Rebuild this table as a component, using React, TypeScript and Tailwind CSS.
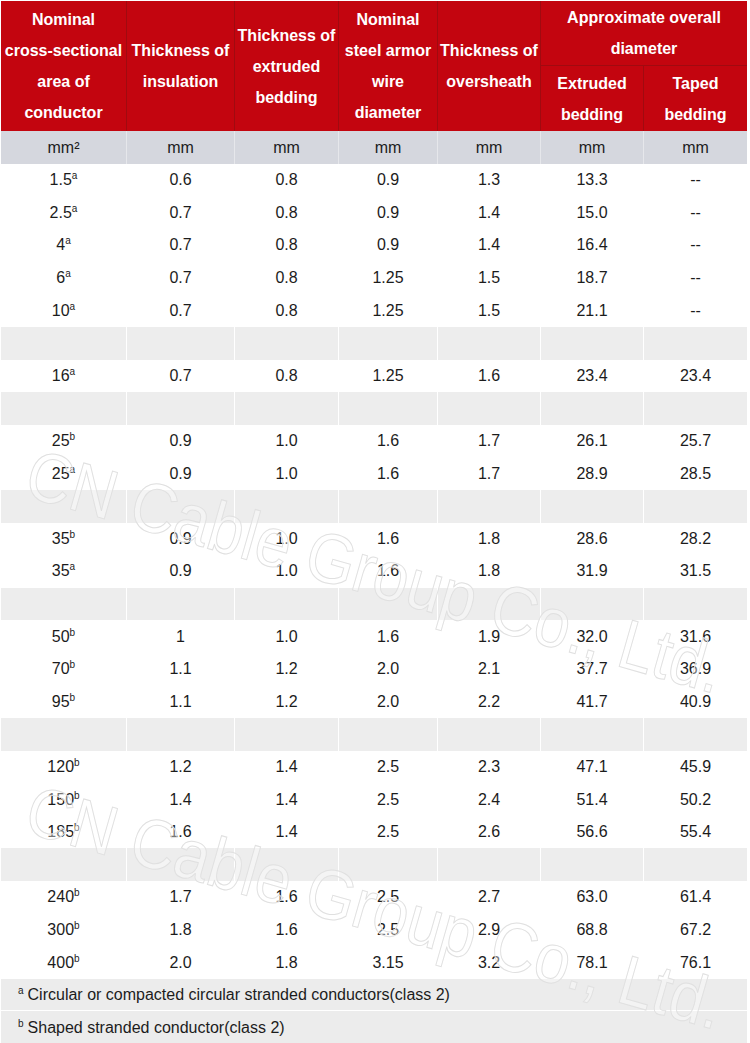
import React from 'react';

type Row = { size: string; note: 'a' | 'b'; vals: string[] } | null;

const rows: Row[] = [
  { size: '1.5', note: 'a', vals: ['0.6', '0.8', '0.9', '1.3', '13.3', '--'] },
  { size: '2.5', note: 'a', vals: ['0.7', '0.8', '0.9', '1.4', '15.0', '--'] },
  { size: '4', note: 'a', vals: ['0.7', '0.8', '0.9', '1.4', '16.4', '--'] },
  { size: '6', note: 'a', vals: ['0.7', '0.8', '1.25', '1.5', '18.7', '--'] },
  { size: '10', note: 'a', vals: ['0.7', '0.8', '1.25', '1.5', '21.1', '--'] },
  null,
  { size: '16', note: 'a', vals: ['0.7', '0.8', '1.25', '1.6', '23.4', '23.4'] },
  null,
  { size: '25', note: 'b', vals: ['0.9', '1.0', '1.6', '1.7', '26.1', '25.7'] },
  { size: '25', note: 'a', vals: ['0.9', '1.0', '1.6', '1.7', '28.9', '28.5'] },
  null,
  { size: '35', note: 'b', vals: ['0.9', '1.0', '1.6', '1.8', '28.6', '28.2'] },
  { size: '35', note: 'a', vals: ['0.9', '1.0', '1.6', '1.8', '31.9', '31.5'] },
  null,
  { size: '50', note: 'b', vals: ['1', '1.0', '1.6', '1.9', '32.0', '31.6'] },
  { size: '70', note: 'b', vals: ['1.1', '1.2', '2.0', '2.1', '37.7', '36.9'] },
  { size: '95', note: 'b', vals: ['1.1', '1.2', '2.0', '2.2', '41.7', '40.9'] },
  null,
  { size: '120', note: 'b', vals: ['1.2', '1.4', '2.5', '2.3', '47.1', '45.9'] },
  { size: '150', note: 'b', vals: ['1.4', '1.4', '2.5', '2.4', '51.4', '50.2'] },
  { size: '185', note: 'b', vals: ['1.6', '1.4', '2.5', '2.6', '56.6', '55.4'] },
  null,
  { size: '240', note: 'b', vals: ['1.7', '1.6', '2.5', '2.7', '63.0', '61.4'] },
  { size: '300', note: 'b', vals: ['1.8', '1.6', '2.5', '2.9', '68.8', '67.2'] },
  { size: '400', note: 'b', vals: ['2.0', '1.8', '3.15', '3.2', '78.1', '76.1'] },
];

const cols = 'grid grid-cols-[125px_107px_103px_98px_102px_102px_103px] gap-x-px';

function HeadCell({ lines, className = '' }: { lines: string[]; className?: string }) {
  return (
    <div className={`bg-[#c3050f] flex flex-col items-center justify-center ${className}`}>
      {lines.map(l => (
        <span key={l} className="leading-[31px] whitespace-nowrap">{l}</span>
      ))}
    </div>
  );
}

// faint diagonal company watermark laid over the table
function Watermark({ top }: { top: string }) {
  return (
    <div
      className={`pointer-events-none absolute left-1/2 ${top} -translate-x-1/2 -translate-y-1/2 rotate-[16deg] scale-x-[0.9] whitespace-nowrap text-[70px] text-white/40 [-webkit-text-stroke:1px_#e0e0e0]`}
    >
      CN Cable Group Co., Ltd.
    </div>
  );
}

export default function App() {
  return (
    <div className="relative w-[750px] h-[1043px] overflow-hidden bg-white font-['Liberation_Sans',Arial,sans-serif] text-[16px] text-[#1c1c1c]">
      <div className="pl-px pt-px w-[747px]">
        {/* header */}
        <div className="grid grid-cols-[125px_107px_103px_98px_102px_102px_103px] grid-rows-[64px_65px] gap-px bg-[#a00a10] text-white font-bold">
          <HeadCell className="row-span-2" lines={['Nominal', 'cross-sectional', 'area of', 'conductor']} />
          <HeadCell className="row-span-2" lines={['Thickness of', 'insulation']} />
          <HeadCell className="row-span-2" lines={['Thickness of', 'extruded', 'bedding']} />
          <HeadCell className="row-span-2" lines={['Nominal', 'steel armor', 'wire', 'diameter']} />
          <HeadCell className="row-span-2" lines={['Thickness of', 'oversheath']} />
          <HeadCell className="col-span-2" lines={['Approximate overall', 'diameter']} />
          <HeadCell lines={['Extruded', 'bedding']} />
          <HeadCell lines={['Taped', 'bedding']} />
        </div>

        {/* units */}
        <div className={`${cols} h-[33px] bg-[#e6e7eb]`}>
          <div className="bg-[#d5d7de] flex items-center justify-center">mm²</div>
          {['mm', 'mm', 'mm', 'mm', 'mm', 'mm'].map((u, i) => (
            <div key={i} className="bg-[#d5d7de] flex items-center justify-center">{u}</div>
          ))}
        </div>

        {/* body */}
        {rows.map((r, i) =>
          r ? (
            <div key={i} className={`${cols} h-[32.6px] bg-white`}>
              <div className="flex items-center justify-center">
                <span>
                  {r.size}
                  <sup className="text-[10px] -top-[0.6em]">{r.note}</sup>
                </span>
              </div>
              {r.vals.map((v, j) => (
                <div key={j} className="flex items-center justify-center">{v}</div>
              ))}
            </div>
          ) : (
            <div key={i} className={`${cols} h-[32.6px] bg-white`}>
              {[0, 1, 2, 3, 4, 5, 6].map(j => (
                <div key={j} className="bg-[#ededed]" />
              ))}
            </div>
          )
        )}

        {/* footnotes */}
        <div className="h-[32.6px] bg-[#ececec] flex items-center pl-[17px] border-b border-white">
          <span>
            <sup className="text-[10px] -top-[0.6em] mr-[4px]">a</sup>
            Circular or compacted circular stranded conductors(class 2)
          </span>
        </div>
        <div className="h-[32.6px] bg-[#ececec] flex items-center pl-[17px]">
          <span>
            <sup className="text-[10px] -top-[0.6em] mr-[4px]">b</sup>
            Shaped stranded conductor(class 2)
          </span>
        </div>
      </div>

      <Watermark top="top-[572px]" />
      <Watermark top="top-[908px]" />
    </div>
  );
}
